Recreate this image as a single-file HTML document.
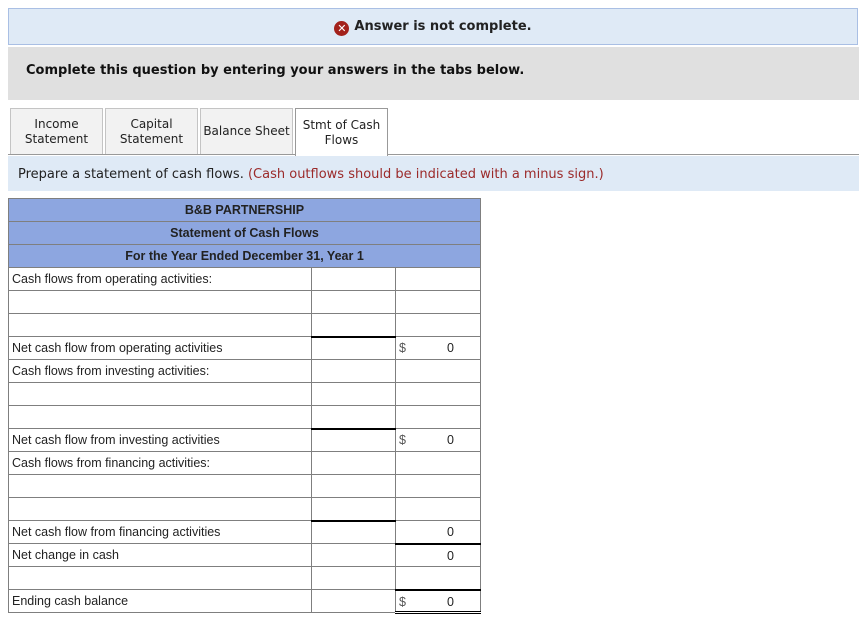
<!DOCTYPE html>
<html><head><style>
body{margin:0;background:#fff;font-family:"Liberation Sans",Arial,sans-serif;width:865px;height:618px;overflow:hidden;position:relative}
.ban{position:absolute;left:8px;top:8px;width:848px;height:35px;background:#dfeaf6;border:1px solid #a9bfe4;font:bold 13px "DejaVu Sans",Verdana,sans-serif;color:#222;text-align:center;line-height:36px}
.ban .x{display:inline-block;width:15px;height:15px;border-radius:50%;background:#a3221c;color:#fff;font-size:11px;line-height:15px;text-align:center;vertical-align:-2px;margin-right:5px}
.gray{position:absolute;left:8px;top:47px;width:851px;height:53px;background:#e0e0e0;font:bold 13px "DejaVu Sans",Verdana,sans-serif;color:#111;line-height:46px;padding-left:18px;box-sizing:border-box;padding-top:1px}
.tab{position:absolute;top:108px;height:46px;border:1px solid #c4c4c4;border-bottom:none;background:#f2f2f2;font:12px "DejaVu Sans",Verdana,sans-serif;color:#222;display:flex;align-items:center;justify-content:center;text-align:center;line-height:15px;box-sizing:border-box}
.tab.a{background:#fff;border-color:#999;height:48px}
.line{position:absolute;left:8px;top:154px;width:851px;height:1px;background:#999}
.ins{position:absolute;left:8px;top:156px;width:851px;height:35px;background:#dfeaf6;font:13px "DejaVu Sans",Verdana,sans-serif;color:#222;line-height:38px;padding-left:10px;box-sizing:border-box}
.ins span{color:#9b2a2a}
table{position:absolute;left:8px;top:198px;border-collapse:collapse;font-size:12.5px;color:#222}
td{border:1px solid #7f7f7f;height:23px;padding:0 3px;box-sizing:border-box}
.h td{background:#8da6e0;text-align:center;font-weight:bold;color:#222}
.c1{width:303px}.c2{width:84px}.c3{width:85px}
.amt{position:relative}
.amt b{font-weight:normal;position:absolute;left:3px;top:4px;color:#555}
.amt i{font-style:normal;position:absolute;right:26px;top:4px}
.tk{border-top:2px solid #000}
.db{border-bottom:3px double #000}
</style></head><body>
<div class="ban"><span class="x">✕</span>Answer is not complete.</div>
<div class="gray">Complete this question by entering your answers in the tabs below.</div>
<div class="tab" style="left:10px;width:93px">Income<br>Statement</div>
<div class="tab" style="left:105px;width:93px">Capital<br>Statement</div>
<div class="tab" style="left:200px;width:93px">Balance Sheet</div>
<div class="line"></div>
<div class="tab a" style="left:295px;width:93px">Stmt of Cash<br>Flows</div>
<div class="ins">Prepare a statement of cash flows. <span>(Cash outflows should be indicated with a minus sign.)</span></div>
<table>
<tr class="h"><td colspan="3">B&amp;B PARTNERSHIP</td></tr>
<tr class="h"><td colspan="3">Statement of Cash Flows</td></tr>
<tr class="h"><td colspan="3">For the Year Ended December 31, Year 1</td></tr>
<tr><td class="c1">Cash flows from operating activities:</td><td class="c2"></td><td class="c3"></td></tr>
<tr><td></td><td></td><td></td></tr>
<tr><td></td><td></td><td></td></tr>
<tr><td>Net cash flow from operating activities</td><td class="tk"></td><td class="amt"><b>$</b><i>0</i></td></tr>
<tr><td>Cash flows from investing activities:</td><td></td><td></td></tr>
<tr><td></td><td></td><td></td></tr>
<tr><td></td><td></td><td></td></tr>
<tr><td>Net cash flow from investing activities</td><td class="tk"></td><td class="amt"><b>$</b><i>0</i></td></tr>
<tr><td>Cash flows from financing activities:</td><td></td><td></td></tr>
<tr><td></td><td></td><td></td></tr>
<tr><td></td><td></td><td></td></tr>
<tr><td>Net cash flow from financing activities</td><td class="tk"></td><td class="amt"><i>0</i></td></tr>
<tr><td>Net change in cash</td><td></td><td class="amt tk"><i>0</i></td></tr>
<tr><td></td><td></td><td></td></tr>
<tr><td>Ending cash balance</td><td></td><td class="amt tk db"><b>$</b><i>0</i></td></tr>
</table>
</body></html>
